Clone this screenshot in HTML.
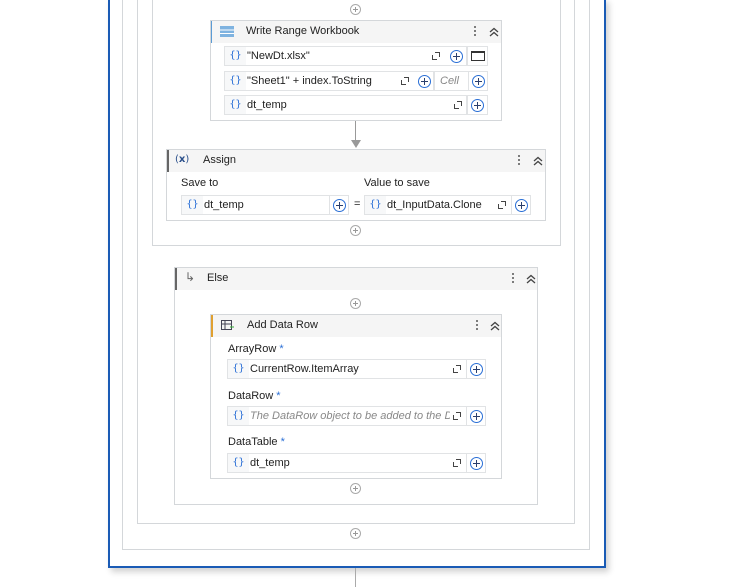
<!DOCTYPE html>
<html><head><meta charset="utf-8"><style>
*{box-sizing:border-box;margin:0;padding:0}
body{width:741px;height:587px;background:#fff;position:relative;overflow:hidden;font-family:"Segoe UI","Liberation Sans",sans-serif;font-size:11px;color:#222}
.a{position:absolute}
.box{position:absolute;border:1px solid #d4d7da;background:#fff}
.hdr{position:absolute;left:0;right:0;top:0;height:22px;background:#f5f5f5;border-left:2px solid #666}
.hdr .t{position:absolute;left:34px;top:4px;font-size:11px;color:#222}
.dots{position:absolute;top:5px;width:3px;font-size:0}
.dots i{display:block;width:2px;height:2px;background:#555;margin:0 0 2px 0;border-radius:1px}
.chev{position:absolute;top:6px}
.f{position:absolute;height:20px;border:1px solid #e1e3e5;background:#fff}
.f .br{position:absolute;left:0;top:0;width:21px;height:18px;background:#f7f8f9;color:#2a6fd6;font-size:10px;text-align:center;line-height:18px;font-family:"DejaVu Sans Mono",monospace}
.f .v{position:absolute;left:22px;top:3px;font-size:11px;white-space:nowrap}
.ex{position:absolute;width:8px;height:8px;top:5px}
.ex:before{content:"";position:absolute;left:0;bottom:0;width:4px;height:4px;border-left:1px solid #444;border-bottom:1px solid #444}
.ex:after{content:"";position:absolute;right:0;top:0;width:4px;height:4px;border-right:1px solid #444;border-top:1px solid #444}
.pl{position:absolute;width:13px;height:13px;border:1px solid #2a6fd6;border-radius:50%}
.pl:before{content:"";position:absolute;left:2px;top:5px;width:7px;height:1px;background:#2a3f6d}
.pl:after{content:"";position:absolute;left:5px;top:2px;width:1px;height:7px;background:#2a3f6d}
.pb{position:absolute;width:20px;height:20px;border:1px solid #e1e3e5;background:#fff}
.pb .pl{left:3px;top:3px}
.gp{position:absolute;width:11px;height:11px;border:1px solid #aaa;border-radius:50%}
.gp:before{content:"";position:absolute;left:2px;top:4px;width:5px;height:1px;background:#999}
.gp:after{content:"";position:absolute;left:4px;top:2px;width:1px;height:5px;background:#999}
.lbl{position:absolute;font-size:11px}
.lbl b{color:#2a6fd6;font-weight:normal}
</style></head><body>
<div class="a" style="left:108px;top:-2px;width:498px;height:570px;border:2px solid #1a5bb5;box-shadow:3px 4px 6px rgba(0,0,0,.18)"></div>
<div class="a" style="left:122px;top:-2px;width:468px;height:552px;border:1px solid #d4d7da"></div>
<div class="a" style="left:137px;top:-2px;width:438px;height:526px;border:1px solid #d4d7da"></div>
<div class="a" style="left:152px;top:-2px;width:409px;height:248px;border:1px solid #d4d7da"></div>
<div class="a" style="left:355px;top:568px;width:1px;height:19px;background:#aaa"></div>
<div class="gp" style="left:350px;top:4px"></div>

<div class="box" style="left:210px;top:20px;width:292px;height:101px">
 <div class="hdr" style="border-left-color:#5b9bd5;border-left-width:1px">
  <svg class="a" style="left:8px;top:5px" width="16" height="11"><rect x="0" y="0" width="14" height="11" fill="#7fb3e0"/><line x1="0" y1="4" x2="14" y2="4" stroke="#fff"/><line x1="0" y1="7.5" x2="14" y2="7.5" stroke="#fff"/></svg>
  <div class="t">Write Range Workbook</div>
  <div class="dots" style="left:262px"><i></i><i></i><i></i></div>
  <svg class="chev" style="left:277px" width="10" height="10"><path d="M1 5 L5 1.5 L9 5 M1 9 L5 5.5 L9 9" fill="none" stroke="#444" stroke-width="1.3"/></svg>
 </div>
 <div class="f" style="left:13px;top:25px;width:243px"><div class="br">{}</div><div class="v">"NewDt.xlsx"</div><div class="ex" style="left:207px"></div><div class="pl" style="left:225px;top:3px"></div></div>
 <div class="pb" style="left:256px;top:25px;width:21px"><div style="position:absolute;left:3px;top:4px;width:14px;height:10px;border:1px solid #333;border-top-width:2px"></div></div>
 <div class="f" style="left:13px;top:50px;width:210px"><div class="br">{}</div><div class="v">"Sheet1" + index.ToString</div><div class="ex" style="left:176px"></div><div class="pl" style="left:193px;top:3px"></div></div>
 <div class="f" style="left:223px;top:50px;width:35px"><div class="v" style="left:5px;font-style:italic;color:#888">Cell</div></div>
 <div class="pb" style="left:257px;top:50px"></div>
 <div class="pl" style="left:261px;top:54px"></div>
 <div class="f" style="left:13px;top:74px;width:243px"><div class="br">{}</div><div class="v">dt_temp</div><div class="ex" style="left:229px"></div></div>
 <div class="pb" style="left:256px;top:74px;width:21px"><div class="pl"></div></div>
</div>
<div class="a" style="left:355px;top:121px;width:1px;height:20px;background:#999"></div>
<div class="a" style="left:351px;top:140px;border-left:5px solid transparent;border-right:5px solid transparent;border-top:8px solid #999"></div>

<div class="box" style="left:166px;top:149px;width:380px;height:72px">
 <div class="hdr">
  <div class="a" style="left:6px;top:4px;font-size:10px;color:#2a4f8a;font-family:'DejaVu Sans',sans-serif">(<b>x</b>)</div>
  <div class="t">Assign</div>
  <div class="dots" style="left:349px"><i></i><i></i><i></i></div>
  <svg class="chev" style="left:364px" width="10" height="10"><path d="M1 5 L5 1.5 L9 5 M1 9 L5 5.5 L9 9" fill="none" stroke="#444" stroke-width="1.3"/></svg>
 </div>
 <div class="lbl" style="left:14px;top:27px">Save to</div>
 <div class="lbl" style="left:197px;top:27px">Value to save</div>
 <div class="f" style="left:14px;top:45px;width:149px"><div class="br">{}</div><div class="v">dt_temp</div></div>
 <div class="pb" style="left:162px;top:45px"></div><div class="pl" style="left:166px;top:49px"></div>
 <div class="a" style="left:187px;top:48px">=</div>
 <div class="f" style="left:197px;top:45px;width:148px"><div class="br">{}</div><div class="v">dt_InputData.Clone</div><div class="ex" style="left:133px"></div></div>
 <div class="pb" style="left:344px;top:45px"></div><div class="pl" style="left:348px;top:49px"></div>
</div>
<div class="gp" style="left:350px;top:225px"></div>

<div class="box" style="left:174px;top:267px;width:364px;height:238px">
 <div class="hdr">
  <div class="a" style="left:8px;top:2px;font-size:12px;color:#666">↳</div>
  <div class="t" style="left:30px">Else</div>
  <div class="dots" style="left:335px"><i></i><i></i><i></i></div>
  <svg class="chev" style="left:349px" width="10" height="10"><path d="M1 5 L5 1.5 L9 5 M1 9 L5 5.5 L9 9" fill="none" stroke="#444" stroke-width="1.3"/></svg>
 </div>
</div>
<div class="gp" style="left:350px;top:298px"></div>
<div class="box" style="left:210px;top:314px;width:292px;height:165px">
 <div class="hdr" style="border-left-color:#e0a030">
  <svg class="a" style="left:8px;top:5px" width="14" height="12"><rect x="0.5" y="0.5" width="10" height="9" fill="none" stroke="#445"/><line x1="0" y1="4" x2="10" y2="4" stroke="#445"/><line x1="4" y1="0" x2="4" y2="10" stroke="#445"/><line x1="9" y1="7" x2="13" y2="7" stroke="#3a3"/></svg>
  <div class="t">Add Data Row</div>
  <div class="dots" style="left:263px"><i></i><i></i><i></i></div>
  <svg class="chev" style="left:277px" width="10" height="10"><path d="M1 5 L5 1.5 L9 5 M1 9 L5 5.5 L9 9" fill="none" stroke="#444" stroke-width="1.3"/></svg>
 </div>
 <div class="lbl" style="left:17px;top:28px">ArrayRow <b>*</b></div>
 <div class="f" style="left:16px;top:44px;width:240px"><div class="br">{}</div><div class="v">CurrentRow.ItemArray</div><div class="ex" style="left:225px"></div></div>
 <div class="pb" style="left:255px;top:44px"><div class="pl"></div></div>
 <div class="lbl" style="left:17px;top:75px">DataRow <b>*</b></div>
 <div class="f" style="left:16px;top:91px;width:240px"><div class="br">{}</div><div class="v" style="font-style:italic;color:#888;width:200px;overflow:hidden">The DataRow object to be added to the DataTable</div><div class="ex" style="left:225px"></div></div>
 <div class="pb" style="left:255px;top:91px"><div class="pl"></div></div>
 <div class="lbl" style="left:17px;top:121px">DataTable <b>*</b></div>
 <div class="f" style="left:16px;top:138px;width:240px"><div class="br">{}</div><div class="v">dt_temp</div><div class="ex" style="left:225px"></div></div>
 <div class="pb" style="left:255px;top:138px"><div class="pl"></div></div>
</div>
<div class="gp" style="left:350px;top:483px"></div>
<div class="gp" style="left:350px;top:528px"></div>
</body></html>
